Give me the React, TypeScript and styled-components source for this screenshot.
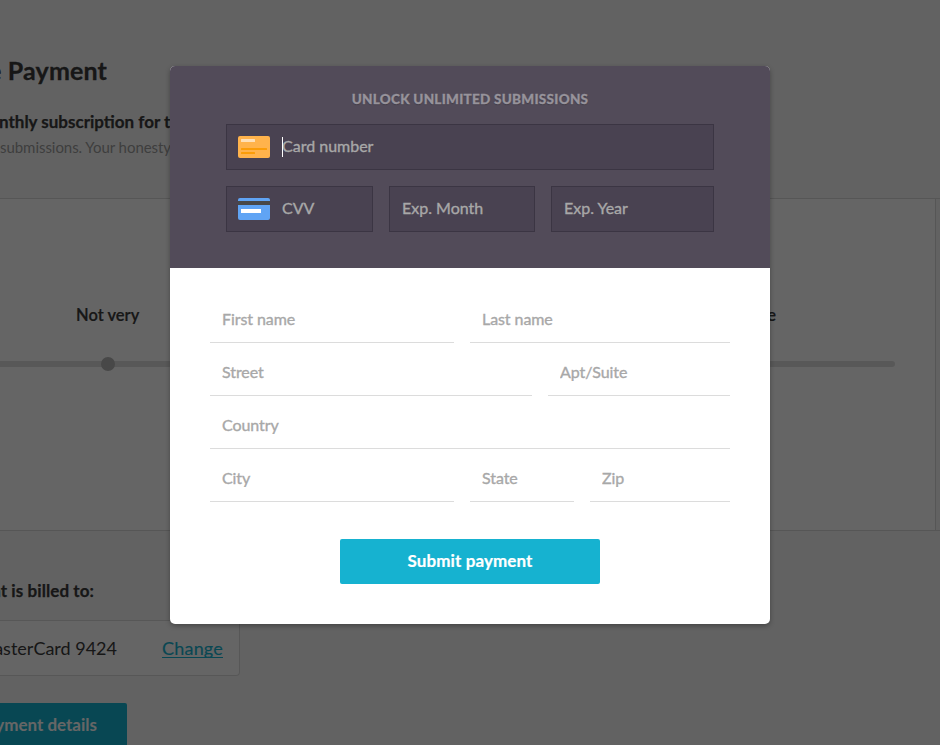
import React from 'react';
import styled, { createGlobalStyle } from 'styled-components';

const GlobalStyle = createGlobalStyle`
  *, *::before, *::after { box-sizing: border-box; }
  html, body { margin: 0; height: 745px; overflow: hidden; background: #f6f6f6; }
  body, input, button { font-family: Lato, "Open Sans", sans-serif; }
`;

const Page = styled.div`
  position: relative;
  width: 940px;
  height: 745px;
  overflow: hidden;
  background: #f6f6f6;
  color: #3a3a3a;
`;

const Intro = styled.header`
  height: 198px;
  padding-top: 53px;
`;

/* Right-aligned line whose beginning runs off the left edge of the window. */
const ClippedLine = styled.div<{ $width: number }>`
  display: flex;
  justify-content: flex-end;
  width: ${(p) => p.$width}px;
  overflow: hidden;
  white-space: pre;
`;

const Title = styled.h1`
  margin: 0;
  font-size: 25px;
  line-height: 34px;
  font-weight: 700;
  letter-spacing: 0.15px;
  -webkit-text-stroke: 0.3px currentColor;
`;

const Lead = styled.p`
  margin: 25px 0 0 -1px;
  font-size: 17px;
  line-height: 20px;
  font-weight: 700;
  -webkit-text-stroke: 0.25px currentColor;
  white-space: pre;
`;

const Note = styled.p`
  margin: 5px 0 0;
  font-size: 15px;
  line-height: 20px;
  letter-spacing: -0.05px;
  color: #9c9c9c;
  white-space: pre;
`;

const Survey = styled.section`
  display: flex;
  height: 333px;
  border-top: 1px solid #d7d7d7;
  border-bottom: 1px solid #d7d7d7;
`;

const SurveyPanel = styled.div`
  width: 936px;
  border-right: 1px solid #d7d7d7;
  background: #fcfcfc;
  padding-top: 106px;
`;

const Choices = styled.div`
  display: flex;
  justify-content: space-between;
  width: 776px;
  padding-left: 76px;
  font-size: 16.5px;
  line-height: 20px;
  font-weight: 600;
  -webkit-text-stroke: 0.2px currentColor;
`;

const Track = styled.div`
  display: flex;
  align-items: center;
  width: 895px;
  height: 6px;
  margin-top: 36px;
  padding-left: 101px;
  border-radius: 0 3px 3px 0;
  background: #dcdcdc;
`;

const Knob = styled.span`
  flex: none;
  width: 14px;
  height: 14px;
  border-radius: 50%;
  background: #b3b3b3;
`;

const Billing = styled.section`
  padding-top: 49px;
`;

const BillingTitle = styled.h2`
  margin: 0;
  font-size: 17px;
  line-height: 22px;
  font-weight: 700;
  letter-spacing: 0.08px;
  -webkit-text-stroke: 0.25px currentColor;
`;

const CardOnFile = styled.div`
  display: flex;
  align-items: center;
  justify-content: space-between;
  width: 240px;
  height: 56px;
  margin-top: 18px;
  padding: 0 16px 0 0;
  border: 1px solid #d9d9d9;
  border-left: 0;
  border-radius: 0 4px 4px 0;
  background: #fcfcfc;
  font-size: 18px;
  line-height: 25px;
`;

const ChangeLink = styled.a`
  color: #16b2d0;
  letter-spacing: 0.2px;
  text-decoration: underline;
  text-decoration-thickness: 1px;
  text-decoration-skip-ink: none;
  text-underline-offset: 2px;
  -webkit-text-stroke: 0.15px currentColor;
`;

const DetailsButton = styled.div`
  display: flex;
  width: 127px;
  height: 45px;
  margin-top: 27px;
  border-radius: 0 2px 2px 0;
  background: #16b2d0;
  color: #fff;
  font-size: 17px;
  line-height: 44px;
  font-weight: 700;
`;

const Overlay = styled.div`
  position: absolute;
  inset: 0;
  display: flex;
  align-items: flex-start;
  justify-content: center;
  padding-top: 66px;
  background: rgba(0, 0, 0, 0.6);
`;

const Modal = styled.form`
  width: 600px;
  height: 558px;
  border-radius: 5px;
  background: #fff;
  box-shadow: 0 2px 5px rgba(0, 0, 0, 0.3);
`;

const CardSection = styled.section`
  height: 202px;
  padding: 23px 56px 0;
  border-radius: 5px 5px 0 0;
  background: #524b59;
`;

const ModalTitle = styled.h2`
  margin: 0 0 15px;
  text-align: center;
  font-size: 13.5px;
  line-height: 20px;
  font-weight: 900;
  letter-spacing: 0.28px;
  text-transform: uppercase;
  white-space: nowrap;
  color: #97939b;
  -webkit-text-stroke: 0.3px currentColor;
  text-shadow: 0 1px 1px rgba(0, 0, 0, 0.2);
`;

const CardRow = styled.div<{ $columns?: string }>`
  display: grid;
  grid-template-columns: ${(p) => p.$columns ?? '1fr'};
  gap: 16px;
  margin-bottom: 16px;
`;

const CardField = styled.label`
  position: relative;
  display: flex;
  align-items: center;
  gap: 12px;
  height: 46px;
  padding: 0 12px;
  border: 1px solid #3b3543;
  background: #494251;

  svg { flex: none; margin-left: -1px; }
`;

const placeholderText = `
  width: 100%;
  min-width: 0;
  height: 20px;
  padding: 0;
  border: 0;
  outline: 0;
  background: transparent;
  font-size: 16px;
  line-height: 20px;
  font-weight: 400;
  -webkit-text-stroke: 0.35px #a8a8a8;
  &::placeholder { color: #a8a8a8; opacity: 1; }
`;

const CardInput = styled.input`
  ${placeholderText}
  margin-bottom: 2px;
`;

const Caret = styled.span`
  position: absolute;
  left: 55px;
  top: 12px;
  width: 1px;
  height: 20px;
  background: #fff;
`;

const AddressSection = styled.section`
  padding: 22px 40px 0;
`;

const AddressRow = styled.div<{ $columns?: string }>`
  display: grid;
  grid-template-columns: ${(p) => p.$columns ?? '1fr'};
  column-gap: 16px;
`;

const AddressField = styled.label`
  display: flex;
  height: 53px;
  padding: 19px 12px 0;
  border-bottom: 1px solid #dcdcdc;
`;

const AddressInput = styled.input`
  ${placeholderText}
  letter-spacing: -0.08px;
`;

const SubmitButton = styled.button`
  display: block;
  width: 260px;
  height: 45px;
  margin: 37px auto 0;
  padding: 0 0 2px;
  border: 0;
  border-radius: 2px;
  background: #16b2d0;
  color: #fff;
  font-size: 17px;
  line-height: 43px;
  font-weight: 700;
  letter-spacing: 0.1px;
  -webkit-text-stroke: 0.2px currentColor;
`;

const CardFront = () => (
  <svg width="32" height="22" viewBox="0 0 32 22">
    <rect width="32" height="22" rx="2" fill="#ffb34c" />
    <rect x="3" y="3" width="14" height="3" rx="0.5" fill="#ffe0b6" />
    <rect x="3" y="12" width="26" height="2" rx="0.5" fill="#fb9d09" />
    <rect x="3" y="16" width="14" height="2" rx="0.5" fill="#fb9d09" />
  </svg>
);

const CardBack = () => (
  <svg width="32" height="22" viewBox="0 0 32 22">
    <rect width="32" height="22" rx="2" fill="#60a4f4" />
    <rect y="3" width="32" height="4" fill="#484848" />
    <rect x="3" y="11" width="20" height="4" fill="#fff" />
  </svg>
);

const addressRows = [
  { columns: '244px 260px', fields: ['First name', 'Last name'] },
  { columns: '322px 182px', fields: ['Street', 'Apt/Suite'] },
  { columns: '1fr', fields: ['Country'] },
  { columns: '244px 104px 140px', fields: ['City', 'State', 'Zip'] },
];

export default function App() {
  return (
    <>
      <GlobalStyle />
      <Page>
        <Intro>
          <ClippedLine $width={107}><Title>e Payment</Title></ClippedLine>
          <Lead>nthly subscription for t</Lead>
          <Note>submissions. Your honesty</Note>
        </Intro>
        <Survey>
          <SurveyPanel>
            <Choices><span>Not very</span><span>e</span></Choices>
            <Track><Knob /></Track>
          </SurveyPanel>
        </Survey>
        <Billing>
          <ClippedLine $width={94}><BillingTitle>nt is billed to:</BillingTitle></ClippedLine>
          <CardOnFile>
            <ClippedLine $width={117}>asterCard 9424</ClippedLine>
            <ChangeLink>Change</ChangeLink>
          </CardOnFile>
          <DetailsButton><ClippedLine $width={97}>yment details</ClippedLine></DetailsButton>
        </Billing>
        <Overlay>
          <Modal>
            <CardSection>
              <ModalTitle>Unlock unlimited submissions</ModalTitle>
              <CardRow>
                <CardField>
                  <CardFront />
                  <CardInput placeholder="Card number" />
                  <Caret />
                </CardField>
              </CardRow>
              <CardRow $columns="147px 146px 163px">
                <CardField><CardBack /><CardInput placeholder="CVV" /></CardField>
                <CardField><CardInput placeholder="Exp. Month" /></CardField>
                <CardField><CardInput placeholder="Exp. Year" /></CardField>
              </CardRow>
            </CardSection>
            <AddressSection>
              {addressRows.map((row) => (
                <AddressRow key={row.fields[0]} $columns={row.columns}>
                  {row.fields.map((field) => (
                    <AddressField key={field}><AddressInput placeholder={field} /></AddressField>
                  ))}
                </AddressRow>
              ))}
              <SubmitButton type="button">Submit payment</SubmitButton>
            </AddressSection>
          </Modal>
        </Overlay>
      </Page>
    </>
  );
}
